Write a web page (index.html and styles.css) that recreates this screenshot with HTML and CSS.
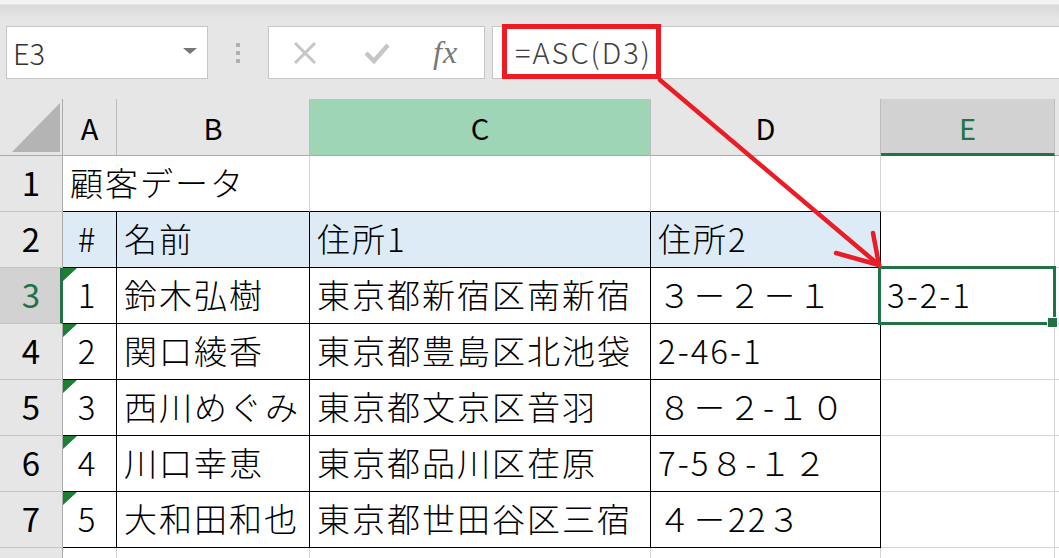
FILE: index.html
```html
<!DOCTYPE html>
<html lang="ja">
<head>
<meta charset="utf-8">
<title>ASC</title>
<link rel="stylesheet" href="styles.css">
</head>
<body>
<div class="app">
  <div class="topstrip"></div>
  <div class="fbar">
    <div class="namebox"><span class="ref">E3</span><span class="dd"></span></div>
    <div class="grip"><i></i><i></i><i></i></div>
    <div class="fxbox">
      <svg class="ico cancel" width="24" height="22" viewBox="0 0 24 22"><path d="M2 1 L22 21 M22 1 L2 21" stroke="#c6c6c6" stroke-width="3" fill="none"/></svg>
      <svg class="ico check" width="26" height="22" viewBox="0 0 26 22"><path d="M2 11 L10 19 L24 3" stroke="#c6c6c6" stroke-width="4.5" fill="none"/></svg>
      <span class="fx">fx</span>
    </div>
    <div class="formula"><span class="hl">=ASC(D3)</span></div>
  </div>

  <div class="sheet">
    <div class="corner"><svg width="62" height="56" viewBox="0 0 62 56"><polygon points="12,53 60,53 60,4" fill="#b4b4b4"/></svg></div>
    <div class="h">A</div>
    <div class="h">B</div>
    <div class="h hi">C</div>
    <div class="h">D</div>
    <div class="h sel">E</div>
    <div class="h"></div>

    <div class="r">1</div>
    <div class="c a over tb">顧客データ</div>
    <div class="c tb"></div>
    <div class="c tb"></div>
    <div class="c tb"></div>
    <div class="c"></div>
    <div class="c"></div>

    <div class="r">2</div>
    <div class="c a t th">#</div>
    <div class="c t th">名前</div>
    <div class="c t th">住所1</div>
    <div class="c t th">住所2</div>
    <div class="c"></div>
    <div class="c"></div>

    <div class="r sel">3</div>
    <div class="c a t err">1</div>
    <div class="c t">鈴木弘樹</div>
    <div class="c t">東京都新宿区南新宿</div>
    <div class="c t">３－２－１</div>
    <div class="c act">3-2-1</div>
    <div class="c"></div>

    <div class="r">4</div>
    <div class="c a t err">2</div>
    <div class="c t">関口綾香</div>
    <div class="c t">東京都豊島区北池袋</div>
    <div class="c t">2-46-1</div>
    <div class="c"></div>
    <div class="c"></div>

    <div class="r">5</div>
    <div class="c a t err">3</div>
    <div class="c t">西川めぐみ</div>
    <div class="c t">東京都文京区音羽</div>
    <div class="c t">８－２-１０</div>
    <div class="c"></div>
    <div class="c"></div>

    <div class="r">6</div>
    <div class="c a t err">4</div>
    <div class="c t">川口幸恵</div>
    <div class="c t">東京都品川区荏原</div>
    <div class="c t">7-5８-１２</div>
    <div class="c"></div>
    <div class="c"></div>

    <div class="r">7</div>
    <div class="c a t err">5</div>
    <div class="c t">大和田和也</div>
    <div class="c t">東京都世田谷区三宿</div>
    <div class="c t">４－22３</div>
    <div class="c"></div>
    <div class="c"></div>

    <div class="r"></div>
    <div class="c"></div>
    <div class="c"></div>
    <div class="c"></div>
    <div class="c"></div>
    <div class="c"></div>
    <div class="c"></div>
  </div>

  <svg class="arrow" width="1059" height="558" viewBox="0 0 1059 558">
    <g stroke="#ea1d27" stroke-width="4.5" stroke-linecap="round" fill="none">
      <path d="M660 80 L879 265"/>
      <path d="M873 233 L879 265 L836 253"/>
    </g>
  </svg>
</div>
</body>
</html>
```
FILE: styles.css
```css
* { box-sizing: border-box; margin: 0; padding: 0; }
html, body { width: 1059px; height: 558px; overflow: hidden; }
body {
  font-family: "Noto Sans CJK JP", "Noto Sans", sans-serif;
  background: #e6e6e6;
  color: #000;
}
.app {
  position: relative;
  width: 1059px;
  height: 558px;
  overflow: hidden;
  background: #e6e6e6;
}
.topstrip {
  height: 20px;
  background: linear-gradient(#f3f3f3 0, #f3f3f3 4px, #d9d9d9 5px, #e6e6e6 20px);
}

/* formula bar */
.fbar {
  display: flex;
  height: 53px;
  margin-top: 6px;
  margin-bottom: 20px;
}
.namebox {
  margin-left: 6px;
  width: 202px;
  background: #fff;
  border: 1px solid #c6c6c6;
  display: flex;
  align-items: center;
  padding-left: 6px;
}
.ref {
  font-size: 29px;
  color: #333;
  line-height: 1;
  font-weight: 300;
}
.dd {
  margin-left: auto;
  margin-right: 10px;
  width: 0;
  height: 0;
  border-top: 6px solid #777;
  border-left: 7px solid transparent;
  border-right: 7px solid transparent;
  margin-top: -4px;
}
.grip {
  width: 60px;
  display: flex;
  flex-direction: column;
  align-items: center;
  justify-content: center;
  gap: 4px;
}
.grip i {
  display: block;
  width: 4px;
  height: 4px;
  background: #b0b0b0;
}
.fxbox {
  width: 217px;
  background: #fff;
  border: 1px solid #c6c6c6;
  display: flex;
  align-items: center;
}
.cancel { margin-left: 24px; }
.check { margin-left: 47px; }
.fx {
  margin-left: 43px;
  font-family: "Liberation Serif", serif;
  font-style: italic;
  font-size: 32px;
  letter-spacing: 1px;
  color: #777;
  line-height: 1;
  margin-top: -2px;
}
.formula {
  margin-left: 7px;
  flex: 1;
  background: #fff;
  border: 1px solid #c6c6c6;
  border-right: none;
}
.hl {
  display: flex;
  align-items: center;
  margin: -3px 0 0 9px;
  width: 159px;
  height: 55px;
  border: 5px solid #ed1c24;
  padding-left: 8px;
  font-size: 29px;
  font-weight: 300;
  letter-spacing: 2px;
  color: #404040;
  line-height: 1;
}

/* sheet */
.sheet {
  display: grid;
  grid-template-columns: 63px 54px 193px 341px 230px 174px 1fr;
  grid-template-rows: 57px repeat(8, 56px);
  background: #fff;
}
.corner {
  background: #e6e6e6;
  border-right: 1px solid #ababab;
  border-bottom: 1px solid #ababab;
}
.corner svg { display: block; }
.h {
  background: #e6e6e6;
  border-right: 1px solid #bdbdbd;
  border-bottom: 1px solid #ababab;
  display: flex;
  align-items: center;
  justify-content: center;
  font-size: 29px;
  line-height: 1;
}
.h.hi { background: #9fd5b7; }
.h.sel {
  background: #d2d2d2;
  color: #217346;
  border-bottom: 3px solid #217346;
  padding-top: 2px;
}
.r {
  background: #e6e6e6;
  border-right: 1px solid #ababab;
  border-bottom: 1px solid #c4c4c4;
  display: flex;
  align-items: center;
  justify-content: center;
  font-size: 33px;
  line-height: 1;
  padding-bottom: 2px;
}
.r.sel {
  background: #d2d2d2;
  color: #217346;
  border-right: 3px solid #217346;
  padding-left: 2px;
}
.c {
  border-right: 1px solid #d4d4d4;
  border-bottom: 1px solid #d4d4d4;
  display: flex;
  align-items: center;
  padding-left: 7px;
  padding-bottom: 3px;
  font-size: 33px;
  font-weight: 300;
  letter-spacing: 2px;
  line-height: 1;
  white-space: nowrap;
}
.c.a {
  justify-content: center;
  padding-left: 0;
  padding-right: 4px;
}
.c.over {
  justify-content: flex-start;
  padding-left: 7px;
  border-right: none;
  overflow: visible;
  position: relative;
  z-index: 1;
}
.c.tb { border-bottom-color: #000; }
.c.t {
  border-right-color: #000;
  border-bottom-color: #000;
}
.c.th { background: #ddebf7; }
.c.err { position: relative; }
.c.err::before {
  content: "";
  position: absolute;
  left: 0;
  top: 0;
  width: 0;
  height: 0;
  border-top: 13px solid #1d7f34;
  border-right: 14px solid transparent;
}
.c.act { position: relative; padding-left: 6px; }
.c.act::after {
  content: "";
  position: absolute;
  left: -3px;
  top: -2px;
  right: -2px;
  bottom: -2px;
  border: 3px solid #217346;
}
.c.act::before {
  content: "";
  position: absolute;
  right: -4px;
  bottom: -5px;
  width: 9px;
  height: 9px;
  background: #217346;
  border: 1px solid #fff;
  z-index: 2;
}
.arrow {
  position: absolute;
  left: 0;
  top: 0;
  pointer-events: none;
  z-index: 5;
}
```
